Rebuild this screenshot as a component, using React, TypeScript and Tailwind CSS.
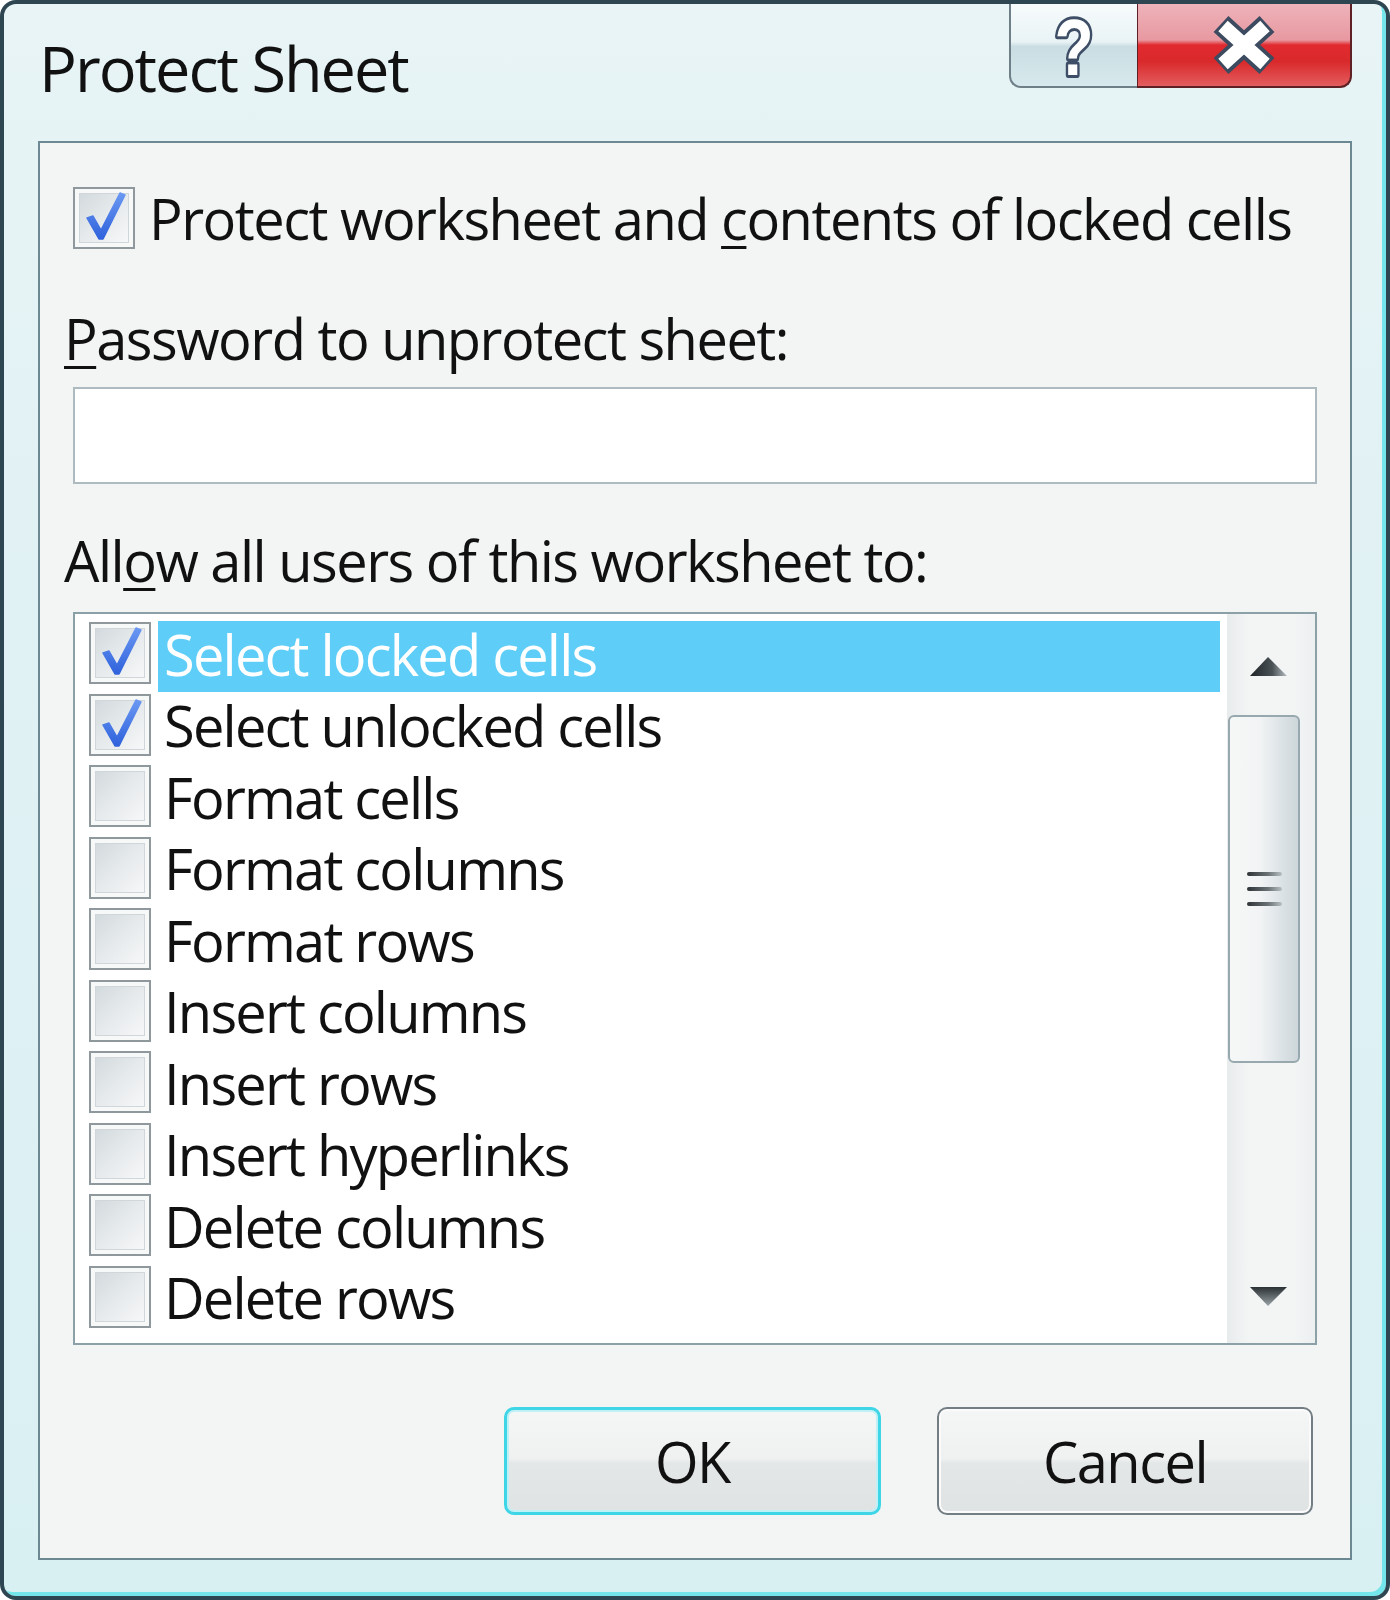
import React from "react";

const rows: { label: string; checked?: boolean; selected?: boolean }[] = [
  { label: "Select locked cells", checked: true, selected: true },
  { label: "Select unlocked cells", checked: true },
  { label: "Format cells" },
  { label: "Format columns" },
  { label: "Format rows" },
  { label: "Insert columns" },
  { label: "Insert rows" },
  { label: "Insert hyperlinks" },
  { label: "Delete columns" },
  { label: "Delete rows" },
];

function CheckBox({ checked }: { checked?: boolean }) {
  return (
    <div className="relative w-[62px] h-[62px] shrink-0 border-2 border-[#8e989d] bg-[#f7f8f8] p-[4px]">
      <div className="w-full h-full border border-[#d0d6d9] bg-[linear-gradient(135deg,#d3dadd_0%,#e6eaec_50%,#f6f7f8_100%)]" />
      {checked && (
        <svg
          className="absolute -left-[2px] -top-[2px]"
          width="62"
          height="62"
          viewBox="0 0 62 62"
        >
          <defs>
            <linearGradient id="ck" x1="0" y1="0" x2="0" y2="1">
              <stop offset="0" stopColor="#6a98f2" />
              <stop offset="1" stopColor="#2f62dc" />
            </linearGradient>
          </defs>
          <path
            d="M14 31 L20 29 L28 43 L47 6 L52 8 L30 52 L26 52 Z"
            fill="url(#ck)"
            stroke="url(#ck)"
            strokeWidth="1.5"
            strokeLinejoin="round"
          />
        </svg>
      )}
    </div>
  );
}

function UpArrow() {
  return (
    <svg width="37" height="21" viewBox="0 0 37 21">
      <defs>
        <linearGradient id="ua" x1="0" y1="0" x2="1" y2="0">
          <stop offset="0" stopColor="#1f2426" />
          <stop offset="0.6" stopColor="#4a5256" />
          <stop offset="1" stopColor="#b4bcc0" />
        </linearGradient>
      </defs>
      <polygon points="0,20 18,1 37,20" fill="url(#ua)" />
    </svg>
  );
}

function DownArrow() {
  return (
    <svg width="37" height="21" viewBox="0 0 37 21">
      <defs>
        <linearGradient id="da" x1="0" y1="0" x2="0" y2="1">
          <stop offset="0" stopColor="#2a3033" />
          <stop offset="1" stopColor="#9aa3a7" />
        </linearGradient>
      </defs>
      <polygon points="0,1 37,1 18,20" fill="url(#da)" />
    </svg>
  );
}

const txt = "text-[56px] leading-none tracking-[-1.5px] text-[#111]";
const ul = "underline decoration-[3px] underline-offset-[6px]";

export default function App() {
  return (
    <div className="w-[1390px] h-[1600px] bg-white font-['Open_Sans',sans-serif]">
      <div className="w-[1390px] h-[1600px] border-[4px] border-[#2e4651] rounded-[16px] bg-[linear-gradient(to_bottom,#e8f4f6_0%,#e2f2f4_30%,#d9f0f3_100%)] shadow-[inset_-4px_-4px_0_#74e5ea] px-[34px] flex flex-col overflow-hidden">
        {/* title bar */}
        <div className="h-[137px] shrink-0 flex justify-between items-start">
          <div className="pl-[1px] mt-[32px] text-[63px] leading-none tracking-[-2px] text-[#111]">
            Protect Sheet
          </div>
          <div className="flex h-[84px]">
            <div className="w-[128px] h-full border-l-2 border-b-2 border-[#6f7f87] rounded-bl-[12px] bg-[linear-gradient(to_bottom,#f7fbfc_0%,#e9f3f5_46%,#c9dde2_52%,#d7e9ed_100%)] flex items-center justify-center">
              <svg width="60" height="76" viewBox="0 0 60 76" overflow="visible">
                <text
                  x="30"
                  y="68"
                  textAnchor="middle"
                  fontFamily="'Liberation Sans', sans-serif"
                  fontWeight="bold"
                  fontSize="80"
                  fill="#ffffff"
                  stroke="#3d4e66"
                  strokeWidth="6"
                  strokeLinejoin="round"
                  paintOrder="stroke"
                  transform="translate(30 0) scale(0.8 1) translate(-30 0)"
                >
                  ?
                </text>
              </svg>
            </div>
            <div className="w-[215px] h-full border-l border-r-2 border-b-2 border-[#5e2024] rounded-br-[12px] bg-[linear-gradient(to_bottom,#eeb3ba_0%,#e898a0_44%,#e12a2f_50%,#d9292b_70%,#e35d5f_100%)] flex items-center justify-center">
              <svg width="80" height="72" viewBox="0 0 80 72">
                <g strokeLinecap="butt">
                  <path d="M17 15 L63 57 M63 15 L17 57" stroke="#3d4b60" strokeWidth="22" />
                  <path d="M19 17 L61 55 M61 17 L19 55" stroke="#ffffff" strokeWidth="14" />
                </g>
              </svg>
            </div>
          </div>
        </div>

        {/* content panel */}
        <div className="h-[1419px] shrink-0 border-2 border-[#6c8892] bg-[#f3f5f5] pl-[24px] pr-[33px] pt-[44px] flex flex-col">
          <div className="ml-[9px] h-[62px] flex items-center">
            <CheckBox checked />
            <div className={`ml-[14px] ${txt}`}>
              Protect worksheet and <span className={ul}>c</span>ontents of locked cells
            </div>
          </div>

          <div className={`mt-[61px] ${txt}`}>
            <span className={ul}>P</span>assword to unprotect sheet:
          </div>

          <div className="mt-[21px] ml-[9px] h-[97px] shrink-0 border-2 border-[#adbabf] bg-white" />

          <div className={`mt-[48px] ${txt}`}>
            All<span className={ul}>o</span>w all users of this worksheet to:
          </div>

          <div className="mt-[24px] ml-[9px] h-[733px] shrink-0 border-2 border-[#8ca0a8] bg-white flex">
            <div className="flex-1 pt-[7px] pl-[14px] pr-[7px]">
              {rows.map((r) => (
                <div key={r.label} className="h-[71.5px] flex items-start">
                  <div className="mt-[1px]">
                    <CheckBox checked={r.checked} />
                  </div>
                  <div
                    className={`ml-[7px] flex-1 h-[71px] pl-[6px] pt-[4.5px] ${
                      r.selected ? "bg-[#5ecdf7] text-white" : "text-[#111]"
                    } text-[56px] leading-none tracking-[-1.8px]`}
                  >
                    {r.label}
                  </div>
                </div>
              ))}
            </div>
            <div className="w-[88px] h-full bg-[linear-gradient(to_right,#e8ebec_0%,#f3f5f5_25%,#f3f5f5_75%,#eceff0_100%)] flex flex-col">
              <div className="h-[101px] pt-[42px] pr-[5px] flex justify-center">
                <UpArrow />
              </div>
              <div className="ml-[1px] w-[72px] h-[348px] rounded-[6px] border-2 border-[#98a8af] bg-[linear-gradient(to_right,#f6f8f8_0%,#f1f3f4_45%,#dce3e6_75%,#cdd6da_100%)] flex flex-col items-center justify-center gap-[11px]">
                <div className="w-[35px] h-[4px] rounded-full bg-[linear-gradient(to_right,#2e3336,#6a7276_60%,#b8c0c4)]" />
                <div className="w-[35px] h-[4px] rounded-full bg-[linear-gradient(to_right,#2e3336,#6a7276_60%,#b8c0c4)]" />
                <div className="w-[35px] h-[4px] rounded-full bg-[linear-gradient(to_right,#2e3336,#6a7276_60%,#b8c0c4)]" />
              </div>
              <div className="flex-1" />
              <div className="mb-[36px] pr-[5px] flex justify-center">
                <DownArrow />
              </div>
            </div>
          </div>

          <div className="mt-[62px] pr-[4px] flex justify-end gap-[56px]">
            <div className="w-[377px] h-[108px] rounded-[10px] border-[3px] border-[#3ed5e6] shadow-[inset_0_0_0_2px_#bff1f6] bg-[linear-gradient(to_bottom,#f5f6f6_0%,#eff0f0_48%,#e4e7e8_52%,#dfe3e4_100%)] flex items-center justify-center">
              <span className={txt}>OK</span>
            </div>
            <div className="w-[376px] h-[108px] rounded-[10px] border-2 border-[#737e84] shadow-[inset_0_0_0_2px_#fbfbfb] bg-[linear-gradient(to_bottom,#f5f6f6_0%,#eff0f0_48%,#e4e7e8_52%,#dfe3e4_100%)] flex items-center justify-center">
              <span className={txt}>Cancel</span>
            </div>
          </div>
        </div>
      </div>
    </div>
  );
}
